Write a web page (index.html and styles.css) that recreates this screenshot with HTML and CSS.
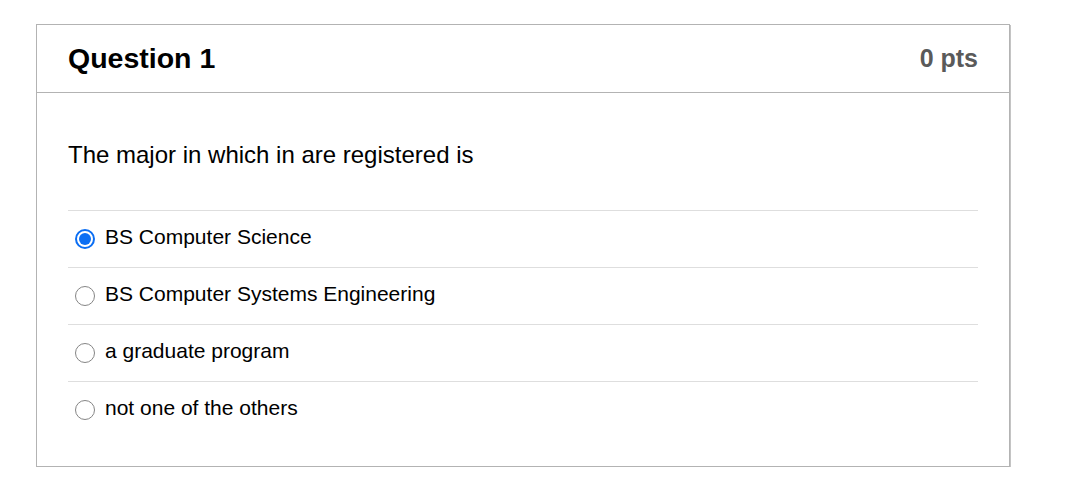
FILE: index.html
```html
<!DOCTYPE html>
<html lang="en">
<head>
<meta charset="utf-8">
<title>Question 1</title>
<link rel="stylesheet" href="styles.css">
</head>
<body>
<div class="quiz-card">
  <div class="quiz-header">
    <h2 class="quiz-title">Question 1</h2>
    <span class="quiz-points">0 pts</span>
  </div>
  <div class="quiz-body">
    <p class="quiz-question">The major in which in are registered is</p>
    <div class="answers">
      <label class="answer">
        <span class="radio radio-checked"></span>
        <span class="answer-text">BS Computer Science</span>
      </label>
      <label class="answer">
        <span class="radio"></span>
        <span class="answer-text">BS Computer Systems Engineering</span>
      </label>
      <label class="answer">
        <span class="radio"></span>
        <span class="answer-text">a graduate program</span>
      </label>
      <label class="answer">
        <span class="radio"></span>
        <span class="answer-text">not one of the others</span>
      </label>
    </div>
  </div>
</div>
</body>
</html>
```

FILE: styles.css
```css
html, body {
  margin: 0;
  padding: 0;
  background: #ffffff;
}

body {
  font-family: "Liberation Sans", Arial, sans-serif;
  color: #000;
  padding: 24px 0 0 36px;
}

.quiz-card {
  width: 972px;
  border: 1px solid #b3b3b3;
  box-shadow: 1px 1px 0 #c4c4c4;
  background: #fff;
}

.quiz-header {
  height: 67px;
  display: flex;
  align-items: center;
  justify-content: space-between;
  padding: 0 31px;
  border-bottom: 1px solid #b3b3b3;
}

.quiz-title {
  margin: 0;
  font-size: 28.5px;
  font-weight: bold;
  line-height: 1;
}

.quiz-points {
  font-size: 25px;
  font-weight: bold;
  color: #5a5a5a;
  line-height: 1;
}

.quiz-body {
  padding: 48px 31px 28px;
}

.quiz-question {
  margin: 0 0 41px;
  font-size: 24px;
  line-height: 28px;
}

.answers {
  display: flex;
  flex-direction: column;
}

.answer {
  height: 56px;
  border-top: 1px solid #dedede;
  display: flex;
  align-items: center;
  gap: 10px;
  padding-left: 7px;
  font-size: 21px;
}

.answer-text {
  line-height: 24px;
  padding-bottom: 5px;
}

.radio {
  width: 20px;
  height: 20px;
  box-sizing: border-box;
  border: 1.5px solid #858585;
  border-radius: 50%;
  background: #fff;
  flex: none;
}

.radio-checked {
  border: 2.5px solid #0b6ef3;
  position: relative;
}

.radio-checked::after {
  content: "";
  position: absolute;
  left: 1.5px;
  top: 1.5px;
  width: 12px;
  height: 12px;
  border-radius: 50%;
  background: #0b6ef3;
}
```
